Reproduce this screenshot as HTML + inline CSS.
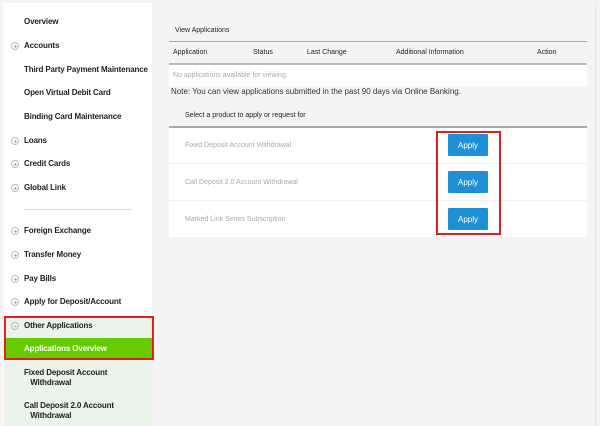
<!DOCTYPE html>
<html><head><style>
*{margin:0;padding:0;box-sizing:border-box}
body{width:600px;height:426px;background:#f4f4f4;font-family:"Liberation Sans",sans-serif;position:relative;overflow:hidden}
.a{position:absolute;white-space:nowrap}
.sb{position:absolute;left:3px;top:3px;width:149px;height:423px;background:#fff}
.it{font-size:8px;font-weight:bold;color:#222;line-height:10px;letter-spacing:-0.15px;margin-top:1px}
.ic{width:8px;height:8px;border:1px solid #bbb;border-radius:50%;position:absolute;left:11px;margin-top:1px}
.ic:after{content:"";position:absolute;left:1.5px;top:3px;width:3px;height:0.8px;background:#aaa}
.ic.p:before{content:"";position:absolute;left:2.6px;top:1.8px;width:0.8px;height:3px;background:#aaa}
.t{font-size:7px;color:#222;margin-top:1px}
.g{font-size:7px;color:#aaa;margin-top:1px}
.btn{position:absolute;left:448px;width:40px;height:22px;background:#1e90d6;color:#fff;font-size:8px;text-align:center;line-height:23px;border-radius:1px}
</style></head><body>
<div class="sb"></div>
<div class="a" style="left:595px;top:3px;width:1px;height:423px;background:#e8e8e8"></div>
<div class="a it" style="left:24px;top:16px">Overview</div>
<div class="ic p" style="top:41px"></div><div class="a it" style="left:24px;top:40px">Accounts</div>
<div class="a it" style="left:24px;top:64px">Third Party Payment Maintenance</div>
<div class="a it" style="left:24px;top:87px">Open Virtual Debit Card</div>
<div class="a it" style="left:24px;top:111px">Binding Card Maintenance</div>
<div class="ic p" style="top:136px"></div><div class="a it" style="left:24px;top:135px">Loans</div>
<div class="ic p" style="top:159px"></div><div class="a it" style="left:24px;top:158px">Credit Cards</div>
<div class="ic p" style="top:183px"></div><div class="a it" style="left:24px;top:182px">Global Link</div>
<div class="a" style="left:24px;top:209px;width:108px;height:1px;background:#ddd"></div>
<div class="ic p" style="top:226px"></div><div class="a it" style="left:24px;top:225px">Foreign Exchange</div>
<div class="ic p" style="top:250px"></div><div class="a it" style="left:24px;top:249px">Transfer Money</div>
<div class="ic p" style="top:274px"></div><div class="a it" style="left:24px;top:273px">Pay Bills</div>
<div class="ic p" style="top:297px"></div><div class="a it" style="left:24px;top:296px">Apply for Deposit/Account</div>
<div class="a" style="left:4px;top:316px;width:148px;height:110px;background:#eaf4ea"></div>
<div class="ic" style="top:321px"></div><div class="a it" style="left:24px;top:320px">Other Applications</div>
<div class="a" style="left:4px;top:338px;width:148px;height:20px;background:#66cc00"></div>
<div class="a it" style="left:24px;top:343px;color:#fff">Applications Overview</div>
<div class="a it" style="left:24px;top:367px">Fixed Deposit Account<br>&nbsp;&nbsp;&nbsp;Withdrawal</div>
<div class="a it" style="left:24px;top:400px">Call Deposit 2.0 Account<br>&nbsp;&nbsp;&nbsp;Withdrawal</div>
<div class="a" style="left:4px;top:316px;width:150px;height:44px;border:2px solid #e02020"></div>

<div class="a t" style="left:175px;top:26px">View Applications</div>
<div class="a" style="left:169px;top:41px;width:418px;height:1px;background:#aaa"></div>
<div class="a t" style="left:173px;top:48px">Application</div>
<div class="a t" style="left:253px;top:48px">Status</div>
<div class="a t" style="left:307px;top:48px">Last Change</div>
<div class="a t" style="left:396px;top:48px">Additional Information</div>
<div class="a t" style="left:537px;top:48px">Action</div>
<div class="a" style="left:169px;top:63px;width:418px;height:1.5px;background:#bbb"></div>
<div class="a" style="left:169px;top:65px;width:418px;height:21px;background:#fff"></div>
<div class="a g" style="left:173px;top:71px">No applications available for viewing.</div>
<div class="a" style="left:171px;top:87px;font-size:8px;color:#333">Note: You can view applications submitted in the past 90 days via Online Banking.</div>
<div class="a t" style="left:185px;top:111px">Select a product to apply or request for</div>
<div class="a" style="left:169px;top:126px;width:418px;height:1.5px;background:#aaa"></div>
<div class="a" style="left:169px;top:128px;width:418px;height:109px;background:#fff"></div>
<div class="a" style="left:169px;top:163px;width:418px;height:1px;background:#f0f0f0"></div>
<div class="a" style="left:169px;top:200px;width:418px;height:1px;background:#f0f0f0"></div>
<div class="a g" style="left:185px;top:141px">Fixed Deposit Account Withdrawal</div>
<div class="a g" style="left:185px;top:178px">Call Deposit 2.0 Account Withdrawal</div>
<div class="a g" style="left:185px;top:215px">Marked Link Series Subscription</div>
<div class="btn" style="top:134px">Apply</div>
<div class="btn" style="top:171px">Apply</div>
<div class="btn" style="top:208px">Apply</div>
<div class="a" style="left:436px;top:131px;width:65px;height:104px;border:2px solid #e02020"></div>
</body></html>
